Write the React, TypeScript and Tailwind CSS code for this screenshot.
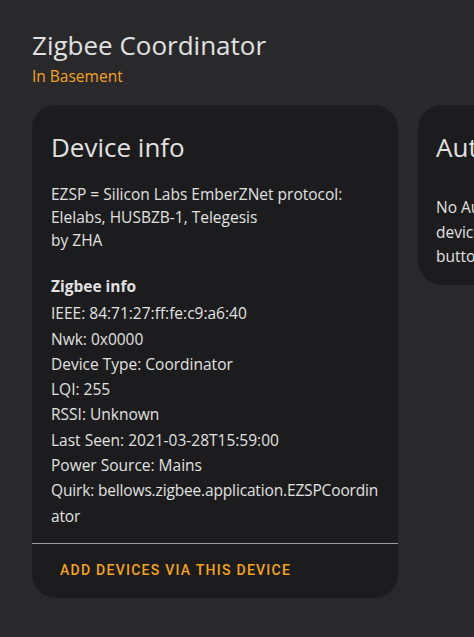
import React from "react";

const lines = [
  "IEEE: 84:71:27:ff:fe:c9:a6:40",
  "Nwk: 0x0000",
  "Device Type: Coordinator",
  "LQI: 255",
  "RSSI: Unknown",
  "Last Seen: 2021-03-28T15:59:00",
  "Power Source: Mains",
];

export default function App() {
  return (
    <div className="min-h-screen w-full overflow-hidden bg-[#29292c] text-[#e1e1e1] font-['Open_Sans','Noto_Sans',sans-serif]">
      <div className="px-[32px] pt-[29px]">
        <h1 className="text-[26px] leading-[32px] font-normal text-[#e1e1e1]">Zigbee Coordinator</h1>
        <div className="mt-[4.5px] text-[15.5px] leading-[20px] text-[#f5a31d]">In Basement</div>
      </div>
      <div className="flex items-start gap-[20px] pl-[32px] mt-[19.5px]">
        <div className="w-[366px] shrink-0 rounded-[24px] bg-[#1c1c1e]">
          <div className="px-[19px] pt-[26px]">
            <h2 className="text-[26px] leading-[32px] font-normal">Device info</h2>
            <div className="mt-[20px] text-[15.5px] leading-[23px]">
              <div>EZSP = Silicon Labs EmberZNet protocol:</div>
              <div>Elelabs, HUSBZB-1, Telegesis</div>
              <div>by ZHA</div>
            </div>
            <div className="mt-[22px] text-[15.5px] leading-[25.3px] pb-[14px]">
              <div className="font-bold mb-[2px]">Zigbee info</div>
              {lines.map((l) => (
                <div key={l}>{l}</div>
              ))}
              <div className="whitespace-nowrap tracking-[-0.01em]">
                Quirk: bellows.zigbee.application.EZSPCoordin
                <br />
                ator
              </div>
            </div>
          </div>
          <div className="border-t border-[#9a9a9a] px-[8px] pt-[9px] pb-[9px]">
            <button className="h-[36px] px-[20px] font-['Roboto',sans-serif] font-medium text-[14px] tracking-[0.09em] uppercase text-[#f5a31d]">
              Add devices via this device
            </button>
          </div>
        </div>
        <div className="w-[366px] shrink-0 rounded-[24px] bg-[#1c1c1e]">
          <div className="px-[18px] pt-[26px] pb-[16px]">
            <h2 className="text-[26px] leading-[32px] font-normal">Automations</h2>
            <div className="mt-[32px] text-[15.5px] leading-[24.5px]">
              No Automations have been added using this
              <br />
              device yet. You can add one by clicking the +
              <br />
              button above.
            </div>
          </div>
        </div>
      </div>
    </div>
  );
}
